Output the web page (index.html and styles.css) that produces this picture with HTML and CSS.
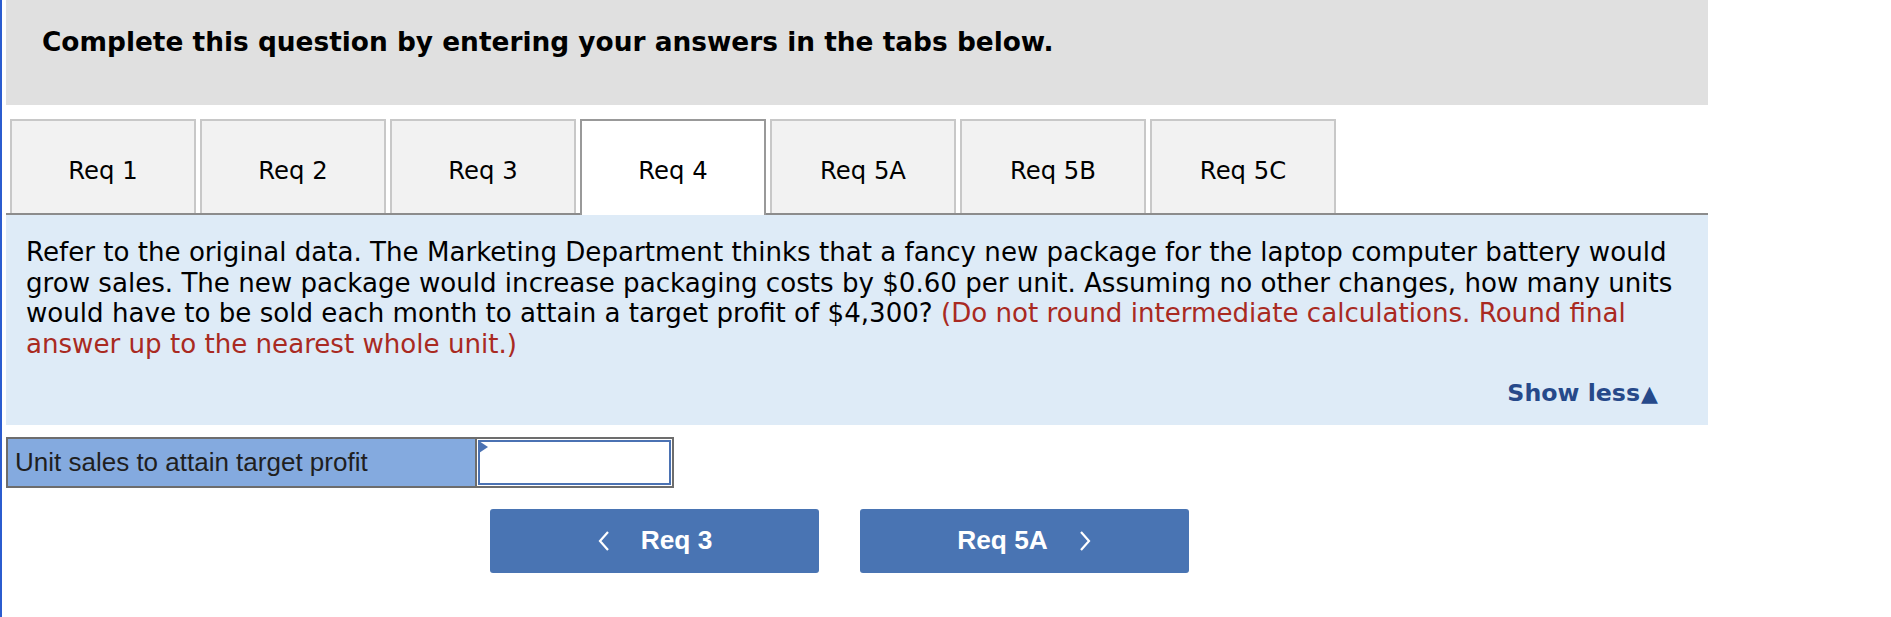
FILE: index.html
```html
<!DOCTYPE html>
<html lang="en">
<head>
<meta charset="utf-8">
<title>Req 4</title>
<link rel="stylesheet" href="styles.css">
</head>
<body>
<div class="page">
  <div class="content">
    <div class="header">
      <h1 class="header-title">Complete this question by entering your answers in the tabs below.</h1>
    </div>

    <div class="tabs">
      <div class="tab">Req 1</div>
      <div class="tab">Req 2</div>
      <div class="tab">Req 3</div>
      <div class="tab tab-active">Req 4</div>
      <div class="tab">Req 5A</div>
      <div class="tab">Req 5B</div>
      <div class="tab">Req 5C</div>
    </div>

    <div class="panel">
      <p class="question">Refer to the original data. The Marketing Department thinks that a fancy new package for the laptop computer battery would grow sales. The new package would increase packaging costs by $0.60 per unit. Assuming no other changes, how many units would have to be sold each month to attain a target profit of $4,300? <span class="note">(Do not round intermediate calculations. Round final answer up to the nearest whole unit.)</span></p>
      <div class="show-less">Show less<span class="tri">&#9650;</span></div>
    </div>

    <div class="answer-row">
      <div class="answer-label">Unit sales to attain target profit</div>
      <div class="answer-cell">
        <div class="answer-input"><span class="corner"></span></div>
      </div>
    </div>

    <div class="nav">
      <button class="nav-btn" type="button">
        <svg class="chev" width="14" height="22" viewBox="0 0 14 22"><path d="M11 2 L3 11 L11 20" fill="none" stroke="#fff" stroke-width="2.2"/></svg>
        <span class="nav-text">Req 3</span>
      </button>
      <button class="nav-btn" type="button">
        <span class="nav-text">Req 5A</span>
        <svg class="chev" width="14" height="22" viewBox="0 0 14 22"><path d="M3 2 L11 11 L3 20" fill="none" stroke="#fff" stroke-width="2.2"/></svg>
      </button>
    </div>
  </div>
</div>
</body>
</html>
```

FILE: styles.css
```css
html, body {
  margin: 0;
  padding: 0;
  background: #ffffff;
}

.page {
  border-left: 2px solid #2b5ccf;
  min-height: 617px;
  box-sizing: border-box;
  padding-left: 4px;
}

.content {
  width: 1702px;
}

.header {
  background: #e0e0e0;
  height: 105px;
  box-sizing: border-box;
  padding: 26px 0 0 36px;
}

.header-title {
  margin: 0;
  font-family: "DejaVu Sans", Verdana, sans-serif;
  font-weight: bold;
  font-size: 26.4px;
  line-height: 32px;
  color: #000;
}

.tabs {
  display: flex;
  gap: 4px;
  padding-left: 4px;
  margin-top: 14px;
  align-items: flex-start;
  margin-bottom: -2px;
}

.tab {
  width: 186px;
  height: 94px;
  box-sizing: border-box;
  border: 2px solid #c8c8c8;
  border-bottom: none;
  background: #f2f2f2;
  display: flex;
  align-items: center;
  justify-content: center;
  padding-top: 6px;
  font-family: "DejaVu Sans", Verdana, sans-serif;
  font-size: 24.3px;
  color: #000;
}

.tab-active {
  position: relative;
  z-index: 1;
  height: 96px;
  padding-bottom: 2px;
  background: #ffffff;
  border-color: #999999;
}

.panel {
  background: #deebf7;
  border-top: 2px solid #8c8c8c;
  padding: 22px 8px 16px 20px;
}

.question {
  margin: 0;
  font-family: "DejaVu Sans", Verdana, sans-serif;
  font-size: 26.1px;
  line-height: 30.7px;
  color: #000;
}

.note {
  color: #a92a22;
}

.show-less {
  margin-top: 18px;
  text-align: right;
  padding-right: 42px;
  font-family: "DejaVu Sans", Verdana, sans-serif;
  font-weight: bold;
  font-size: 23.7px;
  line-height: 30px;
  color: #26498a;
}

.tri {
  font-size: 22px;
  margin-left: 1px;
}

.answer-row {
  display: flex;
  width: 668px;
  margin-top: 12px;
  border: 2px solid #6d6d6d;
  height: 51px;
  box-sizing: border-box;
}

.answer-label {
  width: 469px;
  box-sizing: border-box;
  background: #84aadf;
  border-right: 2px solid #6d6d6d;
  padding-left: 7px;
  display: flex;
  align-items: center;
  font-family: "Liberation Sans", Arial, sans-serif;
  font-size: 26px;
  color: #1f1f1f;
}

.answer-cell {
  flex: 1;
  padding: 1px;
  background: #fff;
}

.answer-input {
  position: relative;
  height: 100%;
  box-sizing: border-box;
  border: 2px solid #4b72b3;
  background: #ffffff;
}

.corner {
  position: absolute;
  left: -1px;
  top: -1px;
  width: 0;
  height: 0;
  border-top: 6px solid transparent;
  border-bottom: 6px solid transparent;
  border-left: 9px solid #4b72b3;
}

.nav {
  display: flex;
  gap: 41px;
  margin-top: 21px;
  padding-left: 484px;
}

.nav-btn {
  width: 329px;
  height: 64px;
  border: none;
  border-radius: 3px;
  background: #4974b3;
  color: #fff;
  display: flex;
  align-items: center;
  justify-content: center;
  gap: 30px;
  font-family: "Liberation Sans", Arial, sans-serif;
  font-weight: bold;
  font-size: 26.3px;
  padding: 0;
}

.chev {
  display: block;
}
```
